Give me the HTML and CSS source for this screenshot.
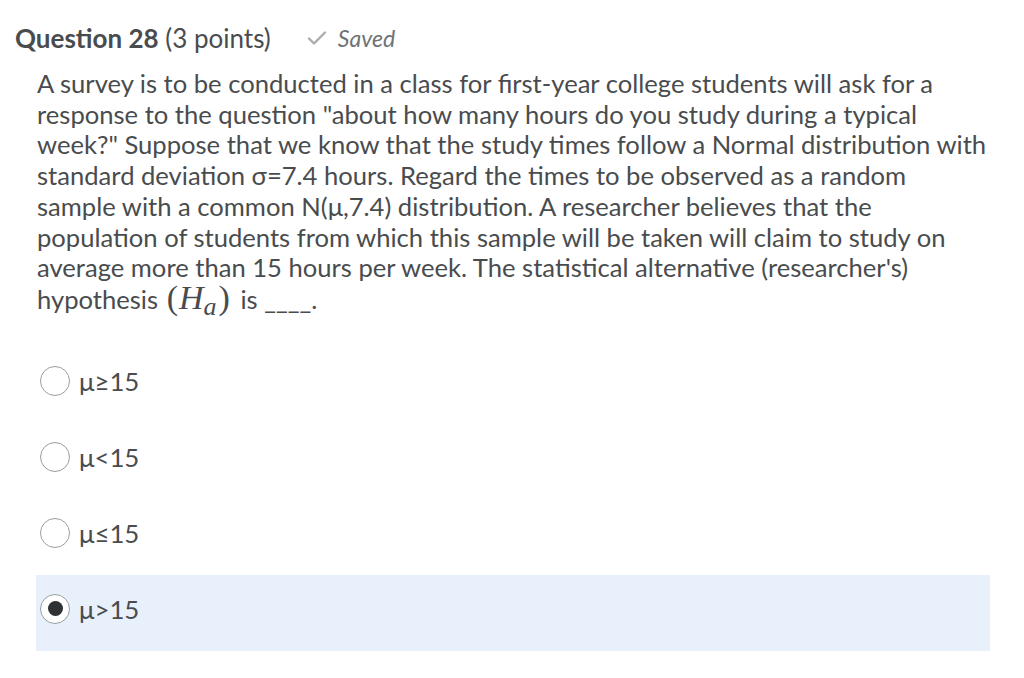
FILE: index.html
```html
<!DOCTYPE html>
<html>
<head>
<meta charset="utf-8">
<link rel="stylesheet" href="styles.css">
</head>
<body>
<div class="page">
  <div class="header">
    <h2 class="title"><span class="qnum">Question 28</span> <span class="pts">(3 points)</span></h2>
    <span class="saved">
      <svg class="check" width="20" height="16" viewBox="0 0 20 16"><path d="M2 8.5 L7 13.5 L18 2.5" fill="none" stroke="#a8adb0" stroke-width="2.4" stroke-linecap="round" stroke-linejoin="round"/></svg>
      <span class="saved-text">Saved</span>
    </span>
  </div>
  <p class="stem">A survey is to be conducted in a class for first-year college students will ask for a<br>response to the question "about how many hours do you study during a typical<br>week?" Suppose that we know that the study times follow a Normal distribution with<br>standard deviation σ=7.4 hours. Regard the times to be observed as a random<br>sample with a common N(μ,7.4) distribution. A researcher believes that the<br>population of students from which this sample will be taken will claim to study on<br>average more than 15 hours per week. The statistical alternative (researcher's)<br>hypothesis <span class="math"><span class="paren">(</span><span class="mi">H</span><sub class="sub">a</sub><span class="paren">)</span></span> is ____.</p>
  <div class="options">
    <label class="option"><span class="radio"></span><span class="opt-text">μ≥15</span></label>
    <label class="option"><span class="radio"></span><span class="opt-text">μ&lt;15</span></label>
    <label class="option"><span class="radio"></span><span class="opt-text">μ≤15</span></label>
    <label class="option selected"><span class="radio checked"></span><span class="opt-text">μ&gt;15</span></label>
  </div>
</div>
</body>
</html>
```
FILE: styles.css
```css
html, body {
  margin: 0;
  padding: 0;
  background: #ffffff;
}
body {
  font-family: Lato, "Open Sans", sans-serif;
  color: #494c4e;
}
.page {
  padding: 18px 30px 0 15px;
}
.header {
  display: flex;
  align-items: center;
  gap: 36px;
  height: 40px;
}
.title {
  margin: 0;
  font-size: 26px;
  font-weight: 400;
  line-height: 40px;
}
.qnum {
  font-weight: 700;
}
.saved {
  display: flex;
  align-items: center;
  gap: 11px;
  color: #6e7376;
  font-style: italic;
  font-size: 23px;
}
.check {
  display: block;
}
.stem {
  margin: 10px 0 0 22px;
  font-size: 25.6px;
  line-height: 30.7px;
  white-space: nowrap;
}
.math {
  font-family: "Liberation Serif", "DejaVu Serif", serif;
  font-size: 34px;
  white-space: nowrap;
  margin: 0 4px 0 2px;
}
.mi {
  font-style: italic;
  margin-left: 1px;
}
.sub {
  font-style: italic;
  font-size: 26px;
  vertical-align: -6px;
  line-height: 0;
  margin-right: 2px;
}
.paren {
  font-style: normal;
}
.options {
  margin: 32px 4px 0 21px;
  display: flex;
  flex-direction: column;
}
.option {
  display: flex;
  align-items: center;
  height: 76px;
  padding: 0 0 8px 4px;
  box-sizing: border-box;
  gap: 9px;
  font-size: 25.8px;
}
.option.selected {
  background: #e8f1fb;
}
.radio {
  width: 30px;
  height: 30px;
  box-sizing: border-box;
  border: 1.5px solid #9a9ea1;
  border-radius: 50%;
  background: #ffffff;
  display: flex;
  align-items: center;
  justify-content: center;
  flex: none;
}
.radio.checked::after {
  content: "";
  width: 15px;
  height: 15px;
  border-radius: 50%;
  background: #2f3235;
}
.opt-text {
  line-height: 30px;
}
```
